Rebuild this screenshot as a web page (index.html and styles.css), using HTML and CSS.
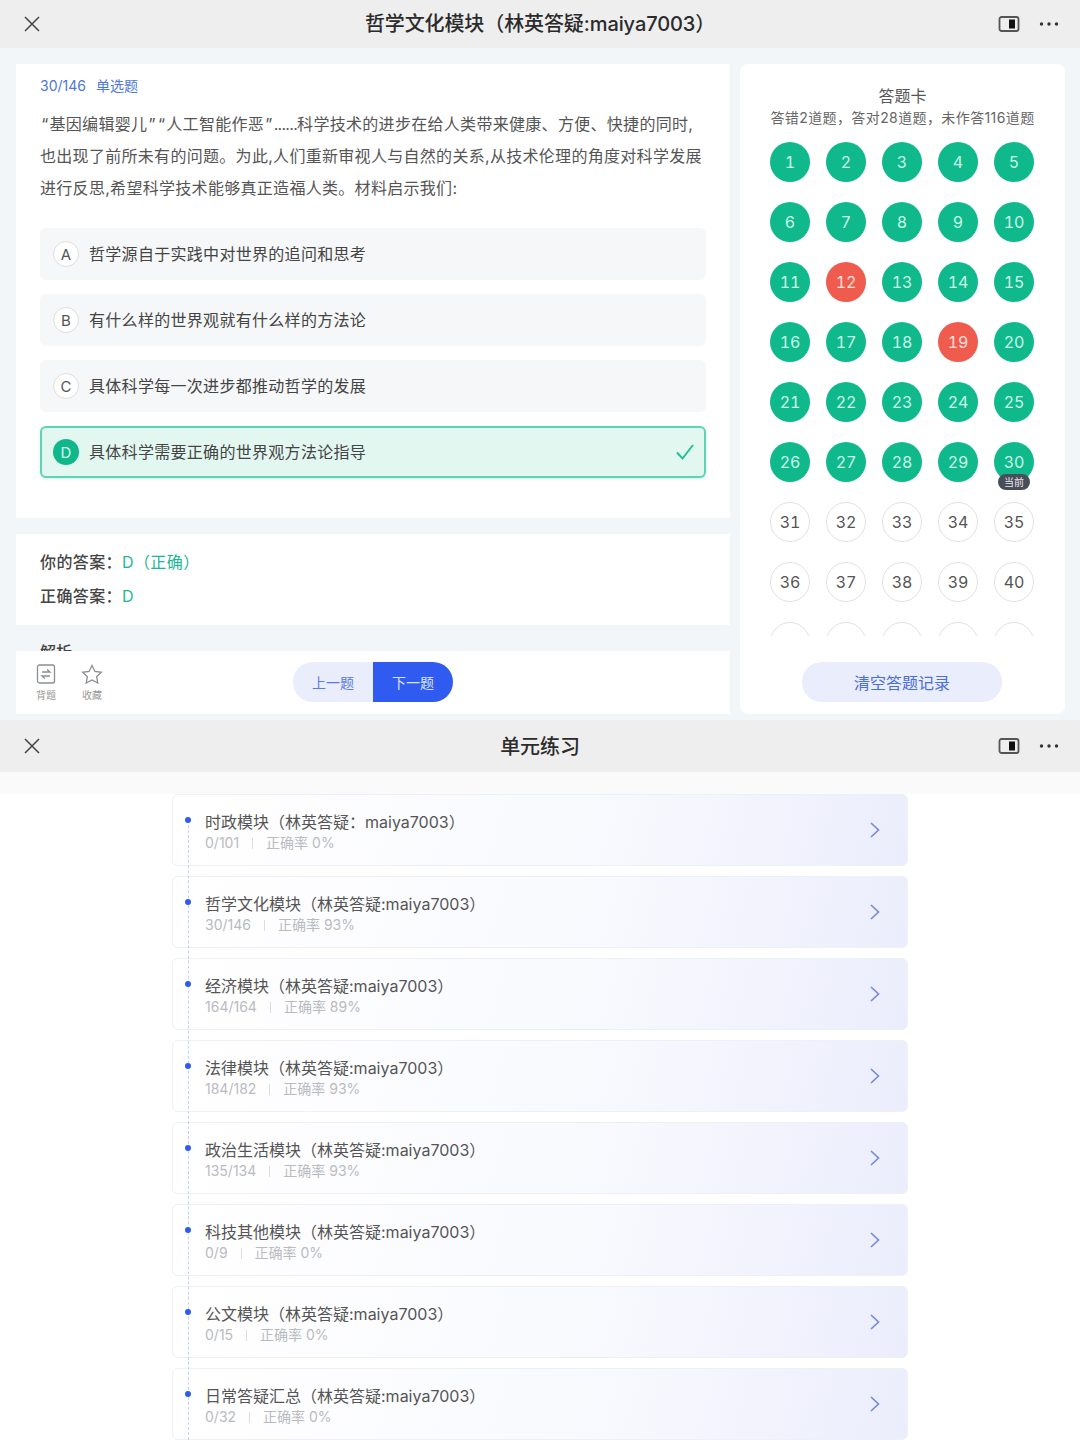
FILE: index.html
```html
<!DOCTYPE html>
<html lang="zh-CN">
<head>
<meta charset="utf-8">
<title>练习</title>
<link rel="stylesheet" href="styles.css">
</head>
<body>
<section class="app app-quiz">
  <header class="nav">
    <svg class="nav-close" width="18" height="18" viewBox="0 0 18 18"><path d="M2 2l14 14M16 2L2 16"/></svg>
    <h1 class="nav-title">哲学文化模块（林英答疑:maiya7003）</h1>
    <div class="nav-actions">
      <svg class="nav-panel" width="22" height="18" viewBox="0 0 22 18"><rect x="1.5" y="2" width="19" height="14" rx="2"/><rect class="fill" x="11" y="4.5" width="6" height="9"/></svg>
      <svg class="nav-more" width="20" height="6" viewBox="0 0 20 6"><circle cx="2.5" cy="3" r="1.7"/><circle cx="10" cy="3" r="1.7"/><circle cx="17.5" cy="3" r="1.7"/></svg>
    </div>
  </header>
  <main class="quiz-body">
    <div class="quiz-left">
      <article class="card question">
        <div class="q-meta"><span>30/146</span><span>单选题</span></div>
        <p class="q-text"><span class="q">“</span>基因编辑婴儿<span class="q">”</span><span class="q">“</span>人工智能作恶<span class="q">”</span><span class="dots">......</span>科学技术的进步在给人类带来健康、方便、快捷的同时,<br>也出现了前所未有的问题。为此,人们重新审视人与自然的关系,从技术伦理的角度对科学发展<br>进行反思,希望科学技术能够真正造福人类。材料启示我们:</p>
        <ul class="options">
          <li class="option"><span class="opt-key">A</span><span class="opt-text">哲学源自于实践中对世界的追问和思考</span></li>
          <li class="option"><span class="opt-key">B</span><span class="opt-text">有什么样的世界观就有什么样的方法论</span></li>
          <li class="option"><span class="opt-key">C</span><span class="opt-text">具体科学每一次进步都推动哲学的发展</span></li>
          <li class="option option-right"><span class="opt-key">D</span><span class="opt-text">具体科学需要正确的世界观方法论指导</span>
            <svg class="opt-check" width="20" height="18" viewBox="0 0 20 18"><path d="M2 9.500l5.500 6L18 2"/></svg></li>
        </ul>
      </article>
      <section class="card answers">
        <div class="ans-row">你的答案：<em>D（正确）</em></div>
        <div class="ans-row">正确答案：<em>D</em></div>
      </section>
      <div class="analysis">解析</div>
      <footer class="card toolbar">
        <div class="tools">
          <div class="tool">
            <svg width="20" height="20" viewBox="0 0 20 20"><rect x="1.500" y="1" width="17" height="18" rx="2"/><path d="M6 8h8l-3-2.500M14 12H6l3 2.500"/></svg>
            <span>背题</span>
          </div>
          <div class="tool">
            <svg width="22" height="20" viewBox="0 0 22 20"><path d="M11 1.500l2.900 6 6.400.8-4.700 4.400 1.200 6.300L11 15.900l-5.800 3.100 1.200-6.300L1.700 8.300l6.400-.8z"/></svg>
            <span>收藏</span>
          </div>
        </div>
        <div class="pager"><span class="pager-prev">上一题</span><span class="pager-next">下一题</span></div>
      </footer>
    </div>
    <aside class="card sheet">
      <div class="sheet-head">
        <h2>答题卡</h2>
        <p>答错2道题，答对28道题，未作答116道题</p>
      </div>
      <div class="sheet-scroll">
        <div class="sheet-grid">
          <span class="num ok">1</span><span class="num ok">2</span><span class="num ok">3</span><span class="num ok">4</span><span class="num ok">5</span>
          <span class="num ok">6</span><span class="num ok">7</span><span class="num ok">8</span><span class="num ok">9</span><span class="num ok">10</span>
          <span class="num ok">11</span><span class="num bad">12</span><span class="num ok">13</span><span class="num ok">14</span><span class="num ok">15</span>
          <span class="num ok">16</span><span class="num ok">17</span><span class="num ok">18</span><span class="num bad">19</span><span class="num ok">20</span>
          <span class="num ok">21</span><span class="num ok">22</span><span class="num ok">23</span><span class="num ok">24</span><span class="num ok">25</span>
          <span class="num ok">26</span><span class="num ok">27</span><span class="num ok">28</span><span class="num ok">29</span><span class="num ok">30<b class="badge">当前</b></span>
          <span class="num">31</span><span class="num">32</span><span class="num">33</span><span class="num">34</span><span class="num">35</span>
          <span class="num">36</span><span class="num">37</span><span class="num">38</span><span class="num">39</span><span class="num">40</span>
          <span class="num num-cut"></span><span class="num num-cut"></span><span class="num num-cut"></span><span class="num num-cut"></span><span class="num num-cut"></span>
        </div>
      </div>
      <div class="sheet-foot"><span class="clear-btn">清空答题记录</span></div>
    </aside>
  </main>
</section>
<section class="app app-units">
  <header class="nav nav-units">
    <svg class="nav-close" width="18" height="18" viewBox="0 0 18 18"><path d="M2 2l14 14M16 2L2 16"/></svg>
    <h1 class="nav-title">单元练习</h1>
    <div class="nav-actions">
      <svg class="nav-panel" width="22" height="18" viewBox="0 0 22 18"><rect x="1.5" y="2" width="19" height="14" rx="2"/><rect class="fill" x="11" y="4.500" width="6" height="9"/></svg>
      <svg class="nav-more" width="20" height="6" viewBox="0 0 20 6"><circle cx="2.5" cy="3" r="1.7"/><circle cx="10" cy="3" r="1.7"/><circle cx="17.5" cy="3" r="1.7"/></svg>
    </div>
  </header>
  <div class="units-band"></div>
  <ul class="units">
    <li class="unit"><div class="unit-main"><h3>时政模块（林英答疑：maiya7003）</h3><p><span>0/101</span><i></i><span>正确率 0%</span></p></div><svg class="chev" width="12" height="18" viewBox="0 0 12 18"><path d="M2 2l7.500 7L2 16"/></svg></li>
    <li class="unit"><div class="unit-main"><h3>哲学文化模块（林英答疑:maiya7003）</h3><p><span>30/146</span><i></i><span>正确率 93%</span></p></div><svg class="chev" width="12" height="18" viewBox="0 0 12 18"><path d="M2 2l7.500 7L2 16"/></svg></li>
    <li class="unit"><div class="unit-main"><h3>经济模块（林英答疑:maiya7003）</h3><p><span>164/164</span><i></i><span>正确率 89%</span></p></div><svg class="chev" width="12" height="18" viewBox="0 0 12 18"><path d="M2 2l7.500 7L2 16"/></svg></li>
    <li class="unit"><div class="unit-main"><h3>法律模块（林英答疑:maiya7003）</h3><p><span>184/182</span><i></i><span>正确率 93%</span></p></div><svg class="chev" width="12" height="18" viewBox="0 0 12 18"><path d="M2 2l7.500 7L2 16"/></svg></li>
    <li class="unit"><div class="unit-main"><h3>政治生活模块（林英答疑:maiya7003）</h3><p><span>135/134</span><i></i><span>正确率 93%</span></p></div><svg class="chev" width="12" height="18" viewBox="0 0 12 18"><path d="M2 2l7.500 7L2 16"/></svg></li>
    <li class="unit"><div class="unit-main"><h3>科技其他模块（林英答疑:maiya7003）</h3><p><span>0/9</span><i></i><span>正确率 0%</span></p></div><svg class="chev" width="12" height="18" viewBox="0 0 12 18"><path d="M2 2l7.500 7L2 16"/></svg></li>
    <li class="unit"><div class="unit-main"><h3>公文模块（林英答疑:maiya7003）</h3><p><span>0/15</span><i></i><span>正确率 0%</span></p></div><svg class="chev" width="12" height="18" viewBox="0 0 12 18"><path d="M2 2l7.500 7L2 16"/></svg></li>
    <li class="unit"><div class="unit-main"><h3>日常答疑汇总（林英答疑:maiya7003）</h3><p><span>0/32</span><i></i><span>正确率 0%</span></p></div><svg class="chev" width="12" height="18" viewBox="0 0 12 18"><path d="M2 2l7.500 7L2 16"/></svg></li>
  </ul>
</section>
</body>
</html>
```
FILE: styles.css
```css
* { box-sizing: border-box; }
html, body { margin: 0; padding: 0; }
body {
  width: 1080px;
  height: 1440px;
  overflow: hidden;
  background: #fff;
  font-family: Inter, "Noto Sans CJK SC", sans-serif;
  color: #444;
}
h1, h2, h3, p, ul { margin: 0; padding: 0; font-weight: 400; }
ul { list-style: none; }
em { font-style: normal; }

.app-quiz { height: 720px; background: #f3f6f8; display: flex; flex-direction: column; }
.app-units { height: 720px; overflow: hidden; background: #fff; }

.nav {
  position: relative;
  height: 48px;
  flex: none;
  background: #eeeeee;
  display: flex;
  align-items: center;
  justify-content: center;
}
.nav-units { height: 52px; padding-top: 1px; }
.nav-title { font-size: 20px; line-height: 28px; font-weight: 500; letter-spacing: -.1px; color: #2b2b2b; }
.nav-close { position: absolute; left: 23px; top: 50%; margin-top: -9px; fill: none; stroke: #444; stroke-width: 1.5; }
.nav-actions { position: absolute; right: 21px; top: 0; bottom: 0; display: flex; align-items: center; gap: 19px; }
.nav-panel { fill: none; stroke: #555; stroke-width: 1.8; }
.nav-panel .fill { fill: #111; stroke: none; }
.nav-more { fill: #333; }

.quiz-body { flex: 1; min-height: 0; display: flex; gap: 10px; padding: 16px 15px 6px 16px; }
.quiz-left { width: 714px; display: flex; flex-direction: column; }
.card { background: #fff; }

.question { padding: 12px 24px 40px; }
.q-meta { display: flex; gap: 10px; font-size: 14px; line-height: 20px; color: #4d78d6; }
.q-text { margin: 12px 0 24px; font-size: 16px; line-height: 32px; color: #555; letter-spacing: .3px; white-space: nowrap; }
.q { display: inline-block; width: 9.5px; text-align: center; letter-spacing: 0; }
.dots { letter-spacing: -.7px; }
.options { display: flex; flex-direction: column; gap: 14px; width: 666px; }
.option {
  height: 52px;
  padding: 0 13px;
  display: flex;
  align-items: center;
  gap: 10px;
  border-radius: 6px;
  background: #f5f7f8;
  font-size: 16px;
  letter-spacing: .3px;
  color: #444;
}
.opt-key {
  width: 26px;
  height: 26px;
  flex: none;
  display: flex;
  align-items: center;
  justify-content: center;
  border-radius: 50%;
  border: 1px solid #dedede;
  background: #fff;
  color: #555;
  font-size: 15px;
  letter-spacing: 0;
}
.option-right {
  padding: 0 11px;
  background: #e3f7f1;
  border: 2px solid #5fd3b6;
  box-shadow: 0 1px 3px rgba(60, 200, 160, .25);
}
.option-right .opt-key { border: 0; background: #0fb78a; color: #d8fff3; }
.opt-text { flex: 1; padding-bottom: 2px; }
.opt-check { fill: none; stroke: #23c096; stroke-width: 2; margin-right: -2px; }

.answers { margin-top: 16px; padding: 11px 24px 12px; }
.ans-row { font-size: 16px; line-height: 34px; color: #444; font-weight: 500; letter-spacing: .4px; }
.ans-row em { color: #1cb893; font-weight: 400; }

.analysis { height: 26px; flex: none; overflow: hidden; padding: 16px 24px 0; font-size: 16px; line-height: 22px; font-weight: 500; color: #444; }

.toolbar {
  flex: 1;
  display: grid;
  grid-template-columns: 1fr auto 1fr;
  align-items: start;
  padding: 11px 20px 0;
}
.tools { display: flex; gap: 26px; }
.tool { display: flex; flex-direction: column; align-items: center; gap: 5px; width: 20px; padding-top: 2px; }
.tool svg { fill: none; stroke: #8b8f94; stroke-width: 1.3; flex: none; }
.tool span { font-size: 10px; line-height: 12px; color: #999; white-space: nowrap; }
.pager { display: flex; height: 40px; font-size: 14px; }
.pager span { width: 80px; display: flex; align-items: center; justify-content: center; }
.pager-prev { background: #e9edfc; color: #5b7bdc; border-radius: 20px 0 0 20px; }
.pager-next { background: #2f5bf0; color: #dbe4ff; border-radius: 0 20px 20px 0; }

.sheet { flex: 1; display: flex; flex-direction: column; border-radius: 8px; padding-top: 21px; }
.sheet-head { text-align: center; }
.sheet-head h2 { font-size: 16px; line-height: 22px; color: #555; }
.sheet-head p { font-size: 14px; line-height: 22px; letter-spacing: .4px; white-space: nowrap; color: #666; }
.sheet-scroll { height: 494px; margin-top: 13px; overflow: hidden; flex: none; padding-left: 30px; }
.sheet-grid { display: grid; grid-template-columns: repeat(5, 40px); column-gap: 16px; row-gap: 20px; }
.num {
  position: relative;
  width: 40px;
  height: 40px;
  display: flex;
  align-items: center;
  justify-content: center;
  border-radius: 50%;
  border: 1px solid #e2e2e2;
  font-size: 16px;
  font-variant-numeric: tabular-nums;
  color: #555;
}
.num.ok { border: 0; background: #0fb98c; color: #c9f7e8; }
.num.bad { border: 0; background: #ef5b4c; color: #ffe1dc; }
.badge {
  position: absolute;
  left: 4px;
  top: 32px;
  width: 32px;
  height: 16px;
  border-radius: 8px;
  background: #494d5a;
  color: #e6e6e6;
  font-size: 10px;
  line-height: 16px;
  font-weight: 400;
  text-align: center;
}
.sheet-foot { display: flex; justify-content: center; padding: 26px 1px 0 0; }
.clear-btn {
  width: 200px;
  height: 40px;
  display: flex;
  align-items: center;
  justify-content: center;
  border-radius: 20px;
  background: #e9edfc;
  color: #4a6edc;
  font-size: 16px;
}

.units-band { height: 22px; background: #fafafa; }
.units {
  position: relative;
  width: 736px;
  margin-left: 172px;
  display: flex;
  flex-direction: column;
  gap: 10px;
}
.units::before {
  content: "";
  position: absolute;
  left: 16px;
  top: 26px;
  bottom: 0;
  border-left: 1px dashed #c6d0f4;
  z-index: 1;
}
.unit {
  position: relative;
  height: 72px;
  flex: none;
  display: flex;
  align-items: flex-start;
  justify-content: space-between;
  padding: 16px 26px 0 32px;
  border: 1px solid #eef0f7;
  border-radius: 6px;
  background: linear-gradient(105deg, #ffffff 0%, #f8f9fe 60%, #ebedfc 100%);
}
.unit::before {
  content: "";
  position: absolute;
  left: 12px;
  top: 22px;
  width: 6px;
  height: 6px;
  border-radius: 50%;
  background: #2f5bf0;
  z-index: 2;
}
.unit h3 { font-size: 16px; line-height: 22px; color: #555; white-space: nowrap; }
.unit p { display: flex; align-items: center; gap: 13px; font-size: 14px; line-height: 20px; color: #b9bbbf; }
.unit p i { width: 1px; height: 11px; background: #dcdde2; }
.chev { margin-top: 10px; fill: none; stroke: #7089d9; stroke-width: 1.6; }
```
